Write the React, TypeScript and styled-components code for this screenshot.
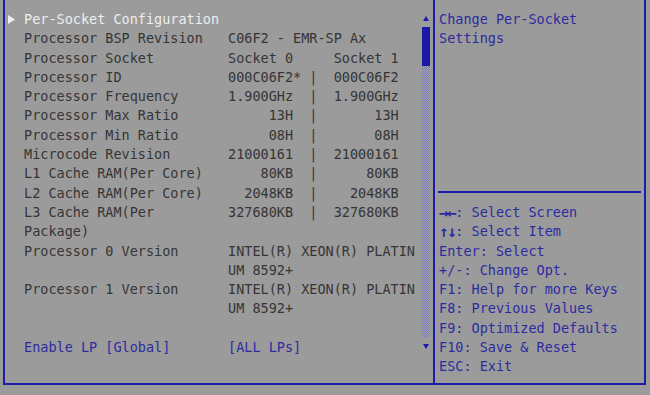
import styled, { createGlobalStyle } from "styled-components";

const Global = createGlobalStyle`
  html, body {
    margin: 0;
    padding: 0;
    background: #9b9b9b;
  }
  body {
    width: 650px;
    height: 395px;
    overflow: hidden;
    font-family: "DejaVu Sans Mono", "Liberation Mono", monospace;
    font-size: 13.5px;
  }
`;

const Frame = styled.div`
  margin-left: 3px;
  width: 639px;
  height: 383px;
  border-left: 2px solid #1c1ca6;
  border-right: 2px solid #1c1ca6;
  border-bottom: 2px solid #1c1ca6;
  display: flex;
`;

const Main = styled.div`
  width: 414px;
  padding: 10px 0 0 3px;
  line-height: 19.3px;
  white-space: pre;
`;

const Row = styled.div`
  display: grid;
  grid-template-columns: 16px 204px 1fr;
  min-height: 19.3px;
`;

const Marker = styled.span`
  display: flex;
  align-items: center;
  height: 19.3px;
`;

const Label = styled.span<{ $blue?: boolean }>`
  color: ${(p) => (p.$blue ? "#2c2ca0" : "#353535")};
`;

const Value = styled.span<{ $blue?: boolean }>`
  color: ${(p) => (p.$blue ? "#2c2ca0" : "#353535")};
`;

const Wide = styled.span`
  grid-column: 2 / 4;
  color: #eeeeee;
`;

const ScrollBar = styled.div`
  width: 8px;
  margin-right: 3px;
  padding: 16px 0 34px;
  display: flex;
  flex-direction: column;
`;

const Arrow = styled.div<{ $down?: boolean }>`
  width: 0;
  height: 0;
  margin-left: 0.5px;
  border-left: 3px solid transparent;
  border-right: 3px solid transparent;
  ${(p) => (p.$down ? "border-top: 5px solid #1c1ca6; margin-top: 7px;" : "border-bottom: 5px solid #1c1ca6; margin-bottom: 6px;")}
`;

const Track = styled.div`
  flex: 1;
  background-color: #9b9b9b;
  background-image: repeating-conic-gradient(#7878b6 0 25%, #a6a6ac 0 50%);
  background-size: 2px 2px;
`;

const Thumb = styled.div`
  height: 39px;
  background: #1a1aa2;
`;

const Side = styled.div`
  flex: 1;
  border-left: 2px solid #1c1ca6;
  display: flex;
  flex-direction: column;
  color: #2c2ca0;
  line-height: 19.3px;
  white-space: pre;
`;

const HelpText = styled.div`
  height: 181px;
  padding: 10px 0 0 4px;
`;

const Divider = styled.div`
  height: 2px;
  margin: 0 3px;
  background: #1c1ca6;
`;

const Keys = styled.div`
  padding: 10px 0 0 4px;
`;

const KeyGlyph = styled.span`
  display: inline-block;
  width: 8.13px;
  text-align: center;
  font-size: 16px;
  font-weight: bold;
  line-height: 19.3px;
  vertical-align: top;
`;

type Item = { label: string[]; value?: string[]; blue?: boolean };

const items: Item[] = [
  { label: ["Processor BSP Revision"], value: ["C06F2 - EMR-SP Ax"] },
  { label: ["Processor Socket"], value: ["Socket 0     Socket 1"] },
  { label: ["Processor ID"], value: ["000C06F2* |  000C06F2"] },
  { label: ["Processor Frequency"], value: ["1.900GHz  |  1.900GHz"] },
  { label: ["Processor Max Ratio"], value: ["     13H  |       13H"] },
  { label: ["Processor Min Ratio"], value: ["     08H  |       08H"] },
  { label: ["Microcode Revision"], value: ["21000161  |  21000161"] },
  { label: ["L1 Cache RAM(Per Core)"], value: ["    80KB  |      80KB"] },
  { label: ["L2 Cache RAM(Per Core)"], value: ["  2048KB  |    2048KB"] },
  { label: ["L3 Cache RAM(Per", "Package)"], value: ["327680KB  |  327680KB"] },
  { label: ["Processor 0 Version"], value: ["INTEL(R) XEON(R) PLATIN", "UM 8592+"] },
  { label: ["Processor 1 Version"], value: ["INTEL(R) XEON(R) PLATIN", "UM 8592+"] },
  { label: [""] },
  { label: ["Enable LP [Global]"], value: ["[ALL LPs]"], blue: true },
];

const keys: [string[], string][] = [
  [["\u2192", "\u2190"], ": Select Screen"],
  [["\u2191", "\u2193"], ": Select Item"],
  [[], "Enter: Select"],
  [[], "+/-: Change Opt."],
  [[], "F1: Help for more Keys"],
  [[], "F8: Previous Values"],
  [[], "F9: Optimized Defaults"],
  [[], "F10: Save & Reset"],
  [[], "ESC: Exit"],
];

export default function App() {
  return (
    <>
      <Global />
      <Frame>
        <Main>
          <Row>
            <Marker>
              <svg width="7" height="9" viewBox="0 0 7 9">
                <polygon points="0,0 7,4.5 0,9" fill="#eeeeee" />
              </svg>
            </Marker>
            <Wide>Per-Socket Configuration</Wide>
          </Row>
          {items.map((it, i) => (
            <Row key={i}>
              <span />
              <Label $blue={it.blue}>{it.label.join("\n")}</Label>
              <Value $blue={it.blue}>{(it.value ?? []).join("\n")}</Value>
            </Row>
          ))}
        </Main>
        <ScrollBar>
          <Arrow />
          <Track>
            <Thumb />
          </Track>
          <Arrow $down />
        </ScrollBar>
        <Side>
          <HelpText>{"Change Per-Socket\nSettings"}</HelpText>
          <Divider />
          <Keys>
            {keys.map(([g, t]) => (
              <div key={t}>
                {g.map((c) => (
                  <KeyGlyph key={c}>{c}</KeyGlyph>
                ))}
                {t}
              </div>
            ))}
          </Keys>
        </Side>
      </Frame>
    </>
  );
}
